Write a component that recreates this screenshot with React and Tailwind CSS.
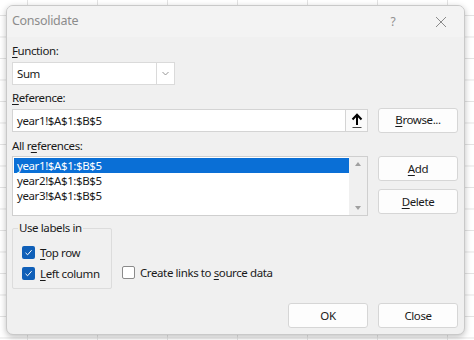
import React from "react";

const U = ({ children }) => <span className="underline underline-offset-[2px] decoration-[1px]">{children}</span>;

const Check = ({ checked }) =>
  checked ? (
    <span className="w-[13px] h-[13px] rounded-[2px] bg-[#0f5fb8] flex items-center justify-center shrink-0">
      <svg width="9" height="9" viewBox="0 0 9 9"><path d="M1.5 4.8 L3.6 6.8 L7.6 2.2" fill="none" stroke="white" strokeWidth="1" /></svg>
    </span>
  ) : (
    <span className="w-[13px] h-[13px] rounded-[2px] bg-white border border-[#8a8a8a] shrink-0" />
  );

const Btn = ({ children, className = "" }) => (
  <div className={`w-[80px] h-[25px] flex items-center justify-center bg-[#fdfdfd] border border-[#d6d6d6] rounded-[3px] text-[#1a1a1a] ${className}`}>
    {children}
  </div>
);

export default function App() {
  return (
    <div
      className="w-[474px] h-[340px] overflow-hidden bg-white pt-[5px] pl-[6px] bg-[image:linear-gradient(to_right,#e3e3e3_1px,transparent_1px),linear-gradient(to_bottom,#e3e3e3_1px,transparent_1px)] bg-[size:70px_21.5px] bg-[position:27px_15px]"
      style={{ fontFamily: '"Noto Sans", "Open Sans", sans-serif' }}
    >
      <div className="w-[459px] h-[330px] rounded-[7px] border border-[#c9c9c9] bg-[#f0f0f0] shadow-[0_2px_6px_rgba(0,0,0,0.25)] flex flex-col overflow-hidden">
        <div className="h-[31px] shrink-0 flex items-center pl-[5px] bg-[#f3f3f3] text-[12.5px] tracking-[-0.3px] text-[#8c8c8c]">
          <span className="flex-1">Consolidate</span>
          <span className="w-[20px] text-center text-[12px] text-[#909090] mr-[32px]">?</span>
          <svg width="12" height="12" viewBox="0 0 12 12" className="mr-[17px]">
            <path d="M1 1 L11 11 M11 1 L1 11" stroke="#8a8a8a" strokeWidth="1" />
          </svg>
        </div>
        <div className="flex flex-col pl-[5px] pr-[6px] text-[11.5px] tracking-[-0.4px] text-[#1a1a1a]">
          <div className="h-[18px] leading-[18px] mt-[5px]"><U>F</U>unction:</div>
          <div className="mt-[2px] w-[163px] h-[23px] bg-white border border-[#dadada] flex">
            <span className="flex-1 pl-[4px] leading-[21px]">Sum</span>
            <span className="w-[18px] border-l border-[#dadada] flex items-center justify-center">
              <svg width="7" height="5" viewBox="0 0 7 5"><path d="M0.5 1 L3.5 4 L6.5 1" fill="none" stroke="#8a8a8a" strokeWidth="0.9" /></svg>
            </span>
          </div>
          <div className="h-[18px] leading-[18px] mt-[4px]"><U>R</U>eference:</div>
          <div className="h-[26px] flex items-center justify-between">
            <div className="w-[356px] h-[23px] mt-[1px] bg-white border border-[#d4d4d4] flex">
              <span className="flex-1 pl-[4px] leading-[21px]">year1!$A$1:$B$5</span>
              <span className="w-[22px] border-l border-[#d4d4d4] bg-[#fafafa] flex items-center justify-center">
                <svg width="12" height="16" viewBox="0 0 12 16">
                  <path d="M6 2 L6 12" stroke="#000" strokeWidth="2" />
                  <path d="M1.5 6.5 L6 1.8 L10.5 6.5" fill="none" stroke="#000" strokeWidth="2" />
                  <path d="M1.5 14.5 L10.5 14.5" stroke="#444" strokeWidth="1" />
                </svg>
              </span>
            </div>
            <Btn><U>B</U>rowse...</Btn>
          </div>
          <div className="h-[18px] leading-[18px] mt-[4px]">All r<U>e</U>ferences:</div>
          <div className="mt-[1px] flex justify-between">
            <div className="w-[356px] h-[60px] bg-white border border-[#cfcfcf] flex">
              <div className="flex-1 pt-[1px] pl-[1px]">
                <div className="h-[15px] leading-[15px] bg-[#0a6fd6] text-white pl-[3px]">year1!$A$1:$B$5</div>
                <div className="h-[15px] leading-[15px] pl-[3px]">year2!$A$1:$B$5</div>
                <div className="h-[15px] leading-[15px] pl-[3px]">year3!$A$1:$B$5</div>
              </div>
              <div className="w-[18px] bg-[#f0f0f0] flex flex-col justify-between items-center py-[5px]">
                <svg width="6" height="4" viewBox="0 0 6 4"><path d="M0 4 L3 0 L6 4Z" fill="#a0a0a0" /></svg>
                <svg width="6" height="4" viewBox="0 0 6 4"><path d="M0 0 L3 4 L6 0Z" fill="#a0a0a0" /></svg>
              </div>
            </div>
            <div className="flex flex-col gap-[8px]">
              <Btn className="h-[24px]"><U>A</U>dd</Btn>
              <Btn><U>D</U>elete</Btn>
            </div>
          </div>
          <div className="mt-[12px] flex items-end">
            <div className="relative w-[100px] h-[61px] border border-[#dcdcdc] rounded-[2px] pl-[9px] pt-[17px] flex flex-col gap-[8px]">
              <span className="absolute left-[5px] top-[-9px] bg-[#f0f0f0] px-[1px] leading-[16px]">Use labels in</span>
              <div className="flex items-center gap-[5px] h-[13px]"><Check checked /><span><U>T</U>op row</span></div>
              <div className="flex items-center gap-[5px] h-[13px]"><Check checked /><span><U>L</U>eft column</span></div>
            </div>
            <div className="flex items-center gap-[5px] ml-[10px] mb-[8px]">
              <Check /><span>Create links to <U>s</U>ource data</span>
            </div>
          </div>
          <div className="mt-[14px] flex justify-end gap-[10px]">
            <Btn className="border-[#86b4e0]">OK</Btn>
            <Btn>Close</Btn>
          </div>
        </div>
      </div>
    </div>
  );
}
